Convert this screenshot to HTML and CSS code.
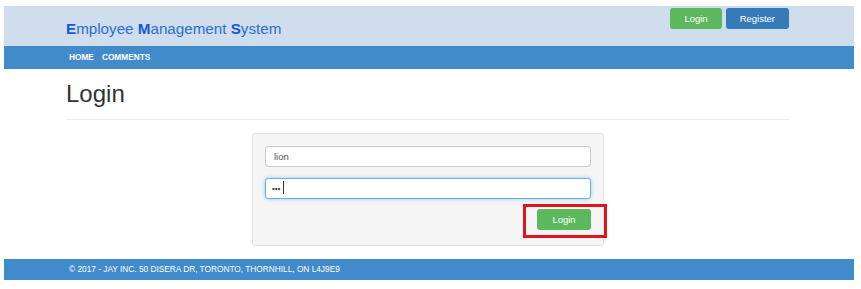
FILE: index.html
```html
<!DOCTYPE html>
<html lang="en">
<head>
    <meta charset="UTF-8">
    <meta name="viewport" content="width=device-width, initial-scale=1.0">
    <title>Login - Employee Management System</title>
    <link rel="stylesheet" href="styles.css">
</head>
<body>
    <header class="top">
        <div class="container top-inner">
            <a class="brand" href="#"><b>E</b>mployee <b>M</b>anagement <b>S</b>ystem</a>
            <div class="top-buttons">
                <a class="btn btn-green" href="#">Login</a>
                <a class="btn btn-blue" href="#">Register</a>
            </div>
        </div>
    </header>
    <nav class="menu">
        <div class="container menu-inner">
            <a href="#">HOME</a>
            <a href="#">COMMENTS</a>
        </div>
    </nav>
    <main class="container">
        <h1 class="page-title">Login</h1>
        <form class="well">
            <input class="field" type="text" value="lion">
            <div class="pass-wrap">
                <input class="field focused" type="password" value="abc">
                <span class="caret"></span>
            </div>
            <div class="actions">
                <span class="highlight">
                    <button class="btn btn-green" type="button">Login</button>
                </span>
            </div>
        </form>
    </main>
    <footer class="bottom">
        <div class="container">
            &copy; 2017 - JAY INC. 50 DISERA DR, TORONTO, THORNHILL, ON L4J9E9
        </div>
    </footer>
</body>
</html>
```

FILE: styles.css
```css
body {
    font-family: "Liberation Sans", Arial, sans-serif;
    margin: 0;
    padding: 6px 7px 9px 4px;
    color: #333;
    background: #fff;
}
.container {
    width: 726px;
    margin: 0 auto;
    box-sizing: border-box;
    padding-right: 2px;
}
.top {
    background-color: #cfdded;
    height: 40px;
}
.top-inner {
    display: flex;
    justify-content: space-between;
    align-items: flex-start;
}
.brand {
    margin-top: 14px;
    font-size: 15.2px;
    color: #2b6fd0;
    text-decoration: none;
}
.brand b {
    color: #1856d6;
}
.top-buttons {
    display: flex;
    gap: 4px;
    margin-top: 2px;
    margin-right: 1px;
}
.btn {
    display: inline-block;
    height: 21px;
    line-height: 21px;
    padding: 0 14px;
    font-family: inherit;
    font-size: 9.5px;
    color: #fff;
    text-decoration: none;
    border: 0;
    border-radius: 3px;
}
.btn-green {
    background-color: #5cb85c;
}
.btn-blue {
    background-color: #337ab7;
}
.menu {
    background-color: #428bca;
    height: 23px;
    line-height: 23px;
}
.menu-inner {
    display: flex;
    gap: 8px;
    padding-left: 3px;
}
.menu a {
    color: #fff;
    font-size: 8.3px;
    font-weight: bold;
    text-decoration: none;
}
.page-title {
    font-size: 24px;
    font-weight: normal;
    margin: 0;
    padding: 11px 0 11px;
    border-bottom: 1px solid #eee;
}
.well {
    width: 326px;
    margin: 13px auto 0;
    padding: 12px 12px 15px;
    background-color: #f5f5f5;
    border: 1px solid #e3e3e3;
    border-radius: 3px;
    display: flex;
    flex-direction: column;
    gap: 10px;
}
.field {
    box-sizing: border-box;
    width: 100%;
    height: 21px;
    margin: 0;
    padding: 0 8px;
    font-family: inherit;
    font-size: 9.5px;
    color: #555;
    background: #fff;
    border: 1px solid #ccc;
    border-radius: 3px;
    outline: none;
}
.field.focused {
    border-color: #66afe9;
    box-shadow: 0 0 4px rgba(102, 175, 233, 0.6);
    font-size: 8px;
    padding-left: 6px;
    color: #333;
}
.pass-wrap {
    position: relative;
}
.caret {
    position: absolute;
    left: 18px;
    top: 4px;
    width: 1px;
    height: 13px;
    background: #333;
}
.actions {
    display: flex;
    justify-content: flex-end;
}
.highlight {
    position: relative;
    display: inline-block;
}
.highlight::after {
    content: "";
    position: absolute;
    top: -5px;
    right: -16px;
    bottom: -8px;
    left: -14px;
    border: 3px solid #e0141a;
}
.actions .btn {
    display: block;
    width: 54px;
    padding: 0;
    text-align: center;
}
.bottom {
    margin-top: 13px;
    background-color: #428bca;
    height: 21px;
    line-height: 21px;
    color: #fff;
    font-size: 8.3px;
}
.bottom .container {
    padding-left: 3px;
}
```
